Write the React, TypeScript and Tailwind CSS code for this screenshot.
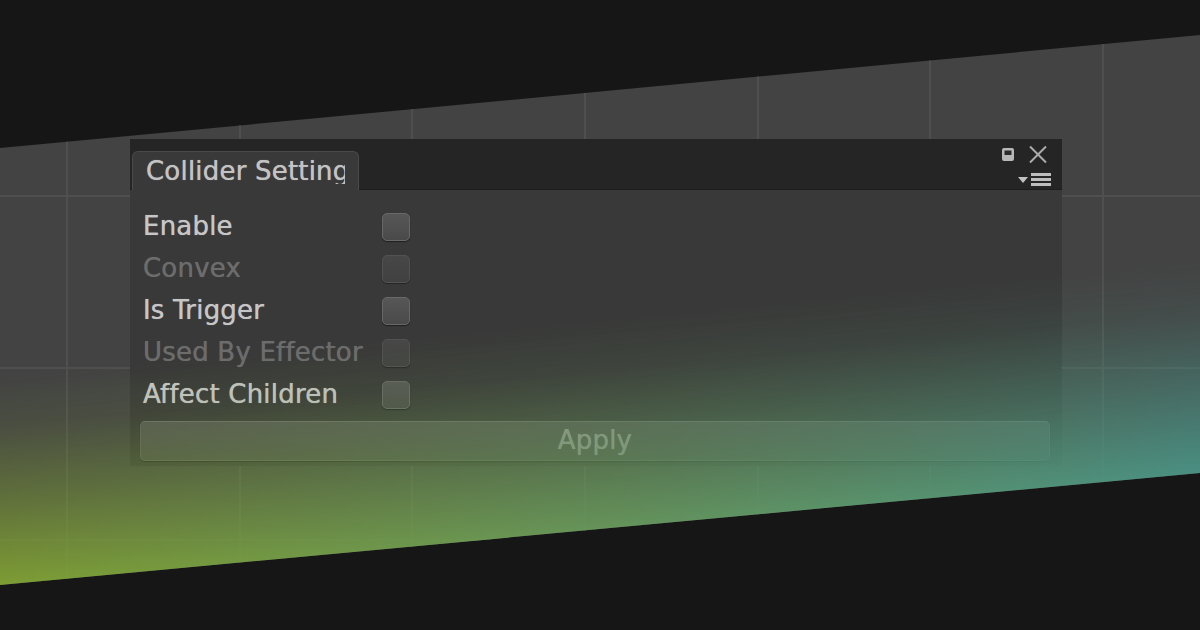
import React from "react";

const BAND = "0,148 1200,35 1200,473 0,585";

function Background() {
  const vx = [67, 240, 412, 585, 758, 930, 1103];
  const hy = [196, 368, 540];
  return (
    <svg className="absolute inset-0" width="1200" height="630" viewBox="0 0 1200 630">
      <defs>
        <clipPath id="bandClip">
          <polygon points={BAND} />
        </clipPath>
      </defs>
      <polygon points={BAND} fill="#434343" />
      <g clipPath="url(#bandClip)" stroke="#4f4f4f" strokeWidth="2">
        {vx.map((x) => (
          <line key={"v" + x} x1={x} y1={0} x2={x} y2={630} />
        ))}
        {hy.map((y) => (
          <line key={"h" + y} x1={0} y1={y} x2={1200} y2={y} />
        ))}
      </g>
    </svg>
  );
}

function Overlay() {
  return (
    <svg className="pointer-events-none absolute inset-0" width="1200" height="630" viewBox="0 0 1200 630">
      <defs>
        <linearGradient id="hue" gradientUnits="userSpaceOnUse" x1="0" y1="0" x2="1200" y2="0">
          <stop offset="0" stopColor="#80a133" />
          <stop offset="0.5" stopColor="#67975a" />
          <stop offset="1" stopColor="#4a9285" />
        </linearGradient>
        <linearGradient id="fade" gradientUnits="userSpaceOnUse" x1="600" y1="529" x2="580" y2="320">
          <stop offset="0" stopColor="#ffffff" stopOpacity="0.96" />
          <stop offset="0.4" stopColor="#ffffff" stopOpacity="0.5" />
          <stop offset="0.75" stopColor="#ffffff" stopOpacity="0.13" />
          <stop offset="1" stopColor="#ffffff" stopOpacity="0" />
        </linearGradient>
        <mask id="fadeMask" style={{ maskType: "alpha" }}>
          <rect x="0" y="0" width="1200" height="630" fill="url(#fade)" />
        </mask>
      </defs>
      <polygon points={BAND} fill="url(#hue)" mask="url(#fadeMask)" />
    </svg>
  );
}

function HeaderIcons() {
  return (
    <svg width="52" height="43" viewBox="0 0 52 43" className="mt-[6px] mr-[10px] shrink-0">
      <rect x="2" y="3" width="12" height="13" rx="2" fill="#b8b8b8" />
      <rect x="4.5" y="5.5" width="7" height="4.5" fill="#2c2c2c" />
      <line x1="30" y1="1.5" x2="46" y2="17.5" stroke="#acacac" strokeWidth="2" />
      <line x1="46" y1="1.5" x2="30" y2="17.5" stroke="#acacac" strokeWidth="2" />
      <polygon points="18,32 28,32 23,38" fill="#c2c2c2" />
      <rect x="31" y="28" width="20" height="3" fill="#bdbdbd" />
      <rect x="31" y="33" width="20" height="3" fill="#bdbdbd" />
      <rect x="31" y="38" width="20" height="3" fill="#bdbdbd" />
    </svg>
  );
}

function Checkbox({ disabled }: { disabled?: boolean }) {
  return (
    <div
      className={
        disabled
          ? "h-[28px] w-[28px] rounded-[5px] border border-[#525252] bg-gradient-to-b from-[#474747] to-[#414141] shadow-[0_1px_1px_rgba(0,0,0,0.35)]"
          : "h-[28px] w-[28px] rounded-[5px] border border-[#686868] bg-gradient-to-b from-[#575757] to-[#4a4a4a] shadow-[0_1px_1px_rgba(0,0,0,0.45)]"
      }
    />
  );
}

const rows: { label: string; disabled?: boolean }[] = [
  { label: "Enable" },
  { label: "Convex", disabled: true },
  { label: "Is Trigger" },
  { label: "Used By Effector", disabled: true },
  { label: "Affect Children" },
];

export default function App() {
  return (
    <div className="relative h-[630px] w-[1200px] overflow-hidden bg-[#161616] font-['DejaVu_Sans',sans-serif] tracking-[0.2px] [text-shadow:0_0_0.7px_currentColor]">
      <Background />
      <div className="relative pl-[130px] pt-[139px]">
        <div className="w-[932px] bg-[#393939]">
          <div className="flex h-[51px] items-start justify-between bg-[#252525] shadow-[inset_0_-1px_0_#1d1d1d]">
            <div className="mt-[12px] ml-[2px] flex h-[39px] w-[227px] items-center rounded-t-[6px] border border-b-0 border-[#4a4a4a] bg-[#393939]">
              <span className="ml-[13px] w-[199px] overflow-hidden whitespace-nowrap text-[26px] leading-none text-[#c3c3c3]">
                Collider Settings
              </span>
            </div>
            <HeaderIcons />
          </div>
          <div className="pt-[16px] pb-[5px]">
            {rows.map((r) => (
              <div key={r.label} className="flex h-[42px] items-center pl-[13px]">
                <span
                  className={
                    r.disabled
                      ? "-mt-[3px] w-[239px] whitespace-nowrap text-[26px] leading-none text-[#6c6c6c]"
                      : "-mt-[3px] w-[239px] whitespace-nowrap text-[26px] leading-none text-[#c6c6c6]"
                  }
                >
                  {r.label}
                </span>
                <Checkbox disabled={r.disabled} />
              </div>
            ))}
            <div className="mt-[5px] ml-[10px] mr-[12px] flex h-[40px] items-center justify-center rounded-[5px] border border-[#5f5f5f] border-t-[#6c6c6c] bg-gradient-to-b from-[#555555] to-[#4c4c4c] shadow-[0_1px_1px_rgba(0,0,0,0.4)]">
              <span className="-mt-[2px] text-[26px] leading-none text-[#9a9a9a]">Apply</span>
            </div>
          </div>
        </div>
      </div>
      <Overlay />
    </div>
  );
}
